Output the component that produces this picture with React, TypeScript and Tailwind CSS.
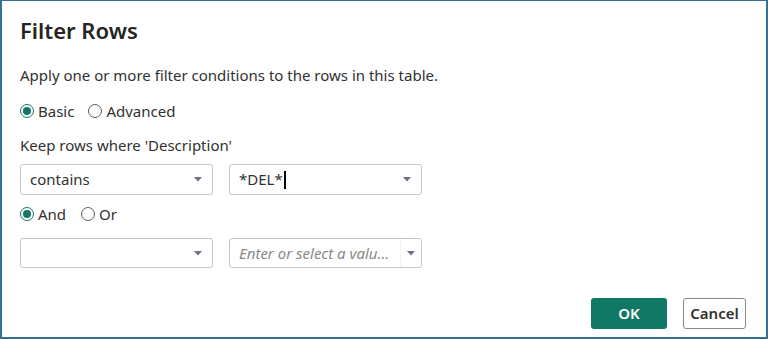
import { useState } from "react";

const font = { fontFamily: '"Noto Sans", "Open Sans", sans-serif' };

function Caret() {
  return (
    <svg width="8" height="5" viewBox="0 0 8 5" className="text-gray-500">
      <path d="M0 0h8L4 4.5z" fill="currentColor" />
    </svg>
  );
}

function Radio({ checked, label, onClick }: { checked: boolean; label: string; onClick: () => void }) {
  return (
    <button onClick={onClick} className="flex items-center gap-[4px] text-[15px] text-[#323130]">
      <span
        className={`flex h-[14px] w-[14px] items-center justify-center rounded-full border ${
          checked ? "border-[#117865]" : "border-[#605e5c]"
        }`}
      >
        {checked && <span className="h-[8px] w-[8px] rounded-full bg-[#117865]" />}
      </span>
      {label}
    </button>
  );
}

export default function App() {
  const [mode, setMode] = useState("basic");
  const [join, setJoin] = useState("and");

  return (
    <div style={font} className="h-[339px] w-[768px] border-2 border-t border-[#31708f] bg-white px-[18px] text-[#323130]">
      <h2 className="pt-[13px] text-[22px] font-semibold leading-[32px] text-[#252423]">Filter Rows</h2>

      <p className="mt-[19px] text-[15px] leading-[20px]">
        Apply one or more filter conditions to the rows in this table.
      </p>

      <div className="mt-[16px] flex h-[20px] items-center gap-[14px]">
        <Radio checked={mode === "basic"} label="Basic" onClick={() => setMode("basic")} />
        <Radio checked={mode === "advanced"} label="Advanced" onClick={() => setMode("advanced")} />
      </div>

      <p className="mt-[14px] text-[15px] leading-[20px]">Keep rows where 'Description'</p>

      <div className="mt-[9px] flex gap-[16px]">
        <div className="flex h-[31px] w-[193px] items-center justify-between rounded-[3px] border border-[#c8c6c4] pl-[9px] pr-[10px] text-[15px]">
          <span>contains</span>
          <Caret />
        </div>
        <div className="flex h-[31px] w-[193px] items-center justify-between rounded-[3px] border border-[#c8c6c4] pl-[9px] pr-[10px] text-[15px]">
          <span className="flex items-center">
            *DEL*<span className="ml-px h-[18px] w-[2px] bg-black" />
          </span>
          <Caret />
        </div>
      </div>

      <div className="mt-[9px] flex h-[20px] items-center gap-[15px]">
        <Radio checked={join === "and"} label="And" onClick={() => setJoin("and")} />
        <Radio checked={join === "or"} label="Or" onClick={() => setJoin("or")} />
      </div>

      <div className="mt-[14px] flex gap-[16px]">
        <div className="flex h-[30px] w-[193px] items-center justify-end rounded-[3px] border border-[#c8c6c4] pr-[10px]">
          <Caret />
        </div>
        <div className="flex h-[30px] w-[193px] items-stretch rounded-[3px] border border-[#c8c6c4] text-[15px]">
          <span className="flex flex-1 items-center pl-[9px] italic text-[#8a8886]">Enter or select a valu...</span>
          <span className="flex w-[21px] items-center justify-center border-l border-[#f3f2f1]">
            <Caret />
          </span>
        </div>
      </div>

      <div className="mt-[30px] flex justify-end gap-[16px] pr-[2px]">
        <button className="h-[31px] w-[76px] rounded-[3px] bg-[#117865] text-[15px] font-semibold text-white">OK</button>
        <button className="h-[31px] w-[63px] rounded-[3px] border border-[#8a8886] bg-white text-[15px] font-semibold text-[#323130]">
          Cancel
        </button>
      </div>
    </div>
  );
}
